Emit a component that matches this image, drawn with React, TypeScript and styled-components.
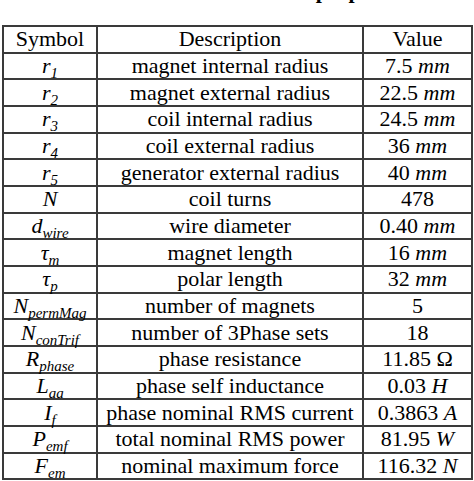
import styled, { createGlobalStyle } from 'styled-components';

const GlobalStyle = createGlobalStyle`
  html, body {
    margin: 0;
    background: #fff;
  }
  body {
    font-family: "Liberation Serif", "Times New Roman", serif;
    color: #000;
    overflow: hidden;
  }
`

const Page = styled.div`
  padding-left: 2px;
  font-family: "Liberation Serif", "Times New Roman", serif;
`

// only the descenders of the caption show above the table
const Caption = styled.div`
  margin-top: -20px;
  height: 22px;
  line-height: 22px;
  font-size: 22px;
  font-weight: bold;
  text-align: right;
  padding-right: 62px;
  margin-bottom: 23px;
  white-space: nowrap;
`

const Table = styled.table`
  border-collapse: separate;
  border-spacing: 0;
  table-layout: fixed;
  width: 471px;
  border-left: 2px solid #3a3a3a;
  border-top: 2px solid #3a3a3a;
  font-family: "Liberation Serif", "Times New Roman", serif;
  color: #000;
`

const Cell = styled.td<{ $w?: number }>`
  box-sizing: border-box;
  ${({ $w }) => ($w ? `width: ${$w}px;` : '')}
  height: 26.67px;
  padding: 0;
  border-right: 2px solid #3a3a3a;
  border-bottom: 2px solid #3a3a3a;
  text-align: center;
  vertical-align: middle;
  font-family: "Liberation Serif", "Times New Roman", serif;
  font-size: 22px;
  line-height: 22px;
  font-weight: normal;
  white-space: nowrap;
`

const HeadCell = styled(Cell).attrs({ as: 'th' })``

const Sym = styled.i`
  font-style: italic;
`

const Sub = styled.span`
  font-style: italic;
  font-size: 15px;
  line-height: 0;
  vertical-align: -5px;
`

const Unit = styled.i`
  font-style: italic;
`

type Row = {
  sym: string;
  sub?: string;
  desc: string;
  value: string;
  unit?: string;
};

const rows: Row[] = [
  { sym: 'r', sub: '1', desc: 'magnet internal radius', value: '7.5', unit: 'mm' },
  { sym: 'r', sub: '2', desc: 'magnet external radius', value: '22.5', unit: 'mm' },
  { sym: 'r', sub: '3', desc: 'coil internal radius', value: '24.5', unit: 'mm' },
  { sym: 'r', sub: '4', desc: 'coil external radius', value: '36', unit: 'mm' },
  { sym: 'r', sub: '5', desc: 'generator external radius', value: '40', unit: 'mm' },
  { sym: 'N', desc: 'coil turns', value: '478' },
  { sym: 'd', sub: 'wire', desc: 'wire diameter', value: '0.40', unit: 'mm' },
  { sym: 'τ', sub: 'm', desc: 'magnet length', value: '16', unit: 'mm' },
  { sym: 'τ', sub: 'p', desc: 'polar length', value: '32', unit: 'mm' },
  { sym: 'N', sub: 'permMag', desc: 'number of magnets', value: '5' },
  { sym: 'N', sub: 'conTrif', desc: 'number of 3Phase sets', value: '18' },
  { sym: 'R', sub: 'phase', desc: 'phase resistance', value: '11.85 Ω' },
  { sym: 'L', sub: 'aa', desc: 'phase self inductance', value: '0.03', unit: 'H' },
  { sym: 'I', sub: 'f', desc: 'phase nominal RMS current', value: '0.3863', unit: 'A' },
  { sym: 'P', sub: 'emf', desc: 'total nominal RMS power', value: '81.95', unit: 'W' },
  { sym: 'F', sub: 'em', desc: 'nominal maximum force', value: '116.32', unit: 'N' },
];

const App = () => {
  return (
    <Page>
      <GlobalStyle />
      <Caption>Table 1. Generator properties</Caption>
      <Table>
        <thead>
          <tr>
            <HeadCell $w={94}>Symbol</HeadCell>
            <HeadCell $w={266}>Description</HeadCell>
            <HeadCell $w={109}>Value</HeadCell>
          </tr>
        </thead>
        <tbody>
          {rows.map((row, idx) => (
            <tr key={idx}>
              <Cell>
                <Sym>{row.sym}</Sym>
                {row.sub ? <Sub>{row.sub}</Sub> : null}
              </Cell>
              <Cell>{row.desc}</Cell>
              <Cell>
                {row.value}
                {row.unit ? <> <Unit>{row.unit}</Unit></> : null}
              </Cell>
            </tr>
          ))}
        </tbody>
      </Table>
    </Page>
  );
};

export default App;
